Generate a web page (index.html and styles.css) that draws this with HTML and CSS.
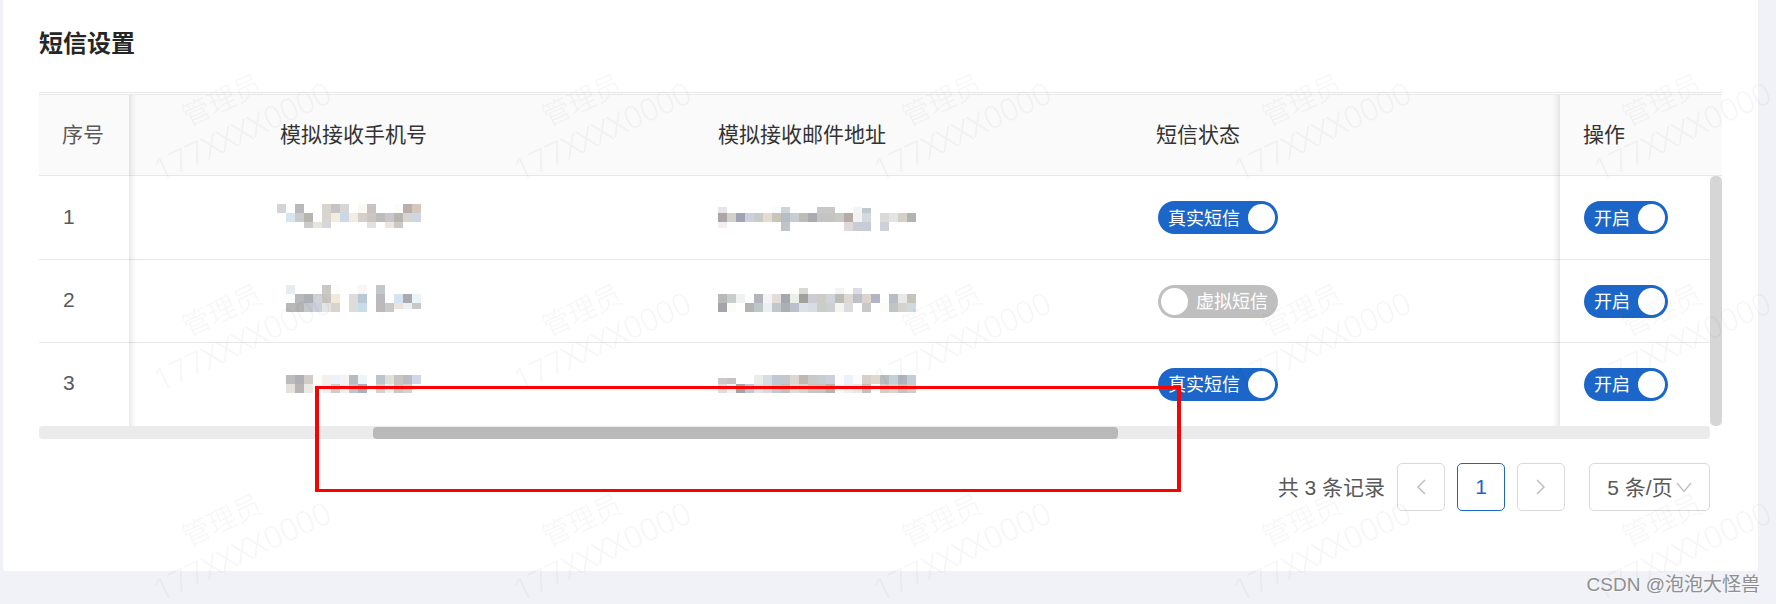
FILE: index.html
```html
<!DOCTYPE html>
<html lang="zh-CN">
<head>
    <meta charset="UTF-8">
    <title>短信设置</title>
    <link rel="stylesheet" href="styles.css">
</head>
<body>
    <div class="card">
        <h2 class="card-title">短信设置</h2>

        <div class="sms-table">
            <div class="table-head">
                <div class="cell fixed-left">序号</div>
                <div class="cell phone-head">模拟接收手机号</div>
                <div class="cell mail-head">模拟接收邮件地址</div>
                <div class="cell">短信状态</div>
                <div class="cell fixed-right">操作</div>
            </div>

            <div class="table-body">
                <div class="rows">
                    <div class="row">
                        <div class="cell fixed-left">1</div>
                        <div class="cell phone-cell">
                            <svg class="mosaic" width="144" height="36">
                                <rect x="0" y="4" fill="#d4d4d4"/><rect x="18" y="4" fill="#b8b8bd"/><rect x="45" y="4" fill="#d8d4ce"/><rect x="54" y="4" fill="#c6c3c6"/><rect x="63" y="4" fill="#d4d6d8"/><rect x="81" y="4" fill="#fbf7f2"/><rect x="90" y="4" fill="#c8c2c0"/><rect x="117" y="4" fill="#fbfdfd"/><rect x="126" y="4" fill="#b8b0ae"/><rect x="135" y="4" fill="#d4c8bc"/>
                                <rect x="9" y="13" fill="#d6e4f0"/><rect x="18" y="13" fill="#c8cccc"/><rect x="27" y="13" fill="#b8b4b0"/><rect x="45" y="13" fill="#d8d4cf"/><rect x="54" y="13" fill="#f4ecdc"/><rect x="63" y="13" fill="#ccd8e8"/><rect x="72" y="13" fill="#f4ece4"/><rect x="81" y="13" fill="#d4cfc9"/><rect x="90" y="13" fill="#ccc6c2"/><rect x="99" y="13" fill="#bcbcb8"/><rect x="108" y="13" fill="#c8c6cc"/><rect x="117" y="13" fill="#b8b4b0"/><rect x="126" y="13" fill="#d8d4d0"/><rect x="135" y="13" fill="#ccd6e4"/>
                                <rect class="short" x="27" y="22" fill="#cccccc"/><rect class="short" x="36" y="22" fill="#e8e4de"/><rect class="short" x="45" y="22" fill="#d4d8dc"/><rect class="short" x="90" y="22" fill="#e4e0de"/><rect class="short" x="108" y="22" fill="#f0e4de"/><rect class="short" x="117" y="22" fill="#ccc8c4"/>
                            </svg>
                        </div>
                        <div class="cell">
                            <svg class="mosaic" width="198" height="36">
                                <rect class="short" x="0" y="7" fill="#e6e6e6"/><rect class="short" x="54" y="7" fill="#f8fcfe"/><rect class="short" x="63" y="7" fill="#d0d4d8"/><rect class="short" x="99" y="7" fill="#c8c8c8"/><rect class="short" x="108" y="7" fill="#c8c8c8"/><rect class="short" x="135" y="7" fill="#f4f4f4"/><rect class="short" x="144" y="8" fill="#c0c8d0"/>
                                <rect x="0" y="13" fill="#aca6a6"/><rect x="9" y="13" fill="#d4d0cc"/><rect x="18" y="13" fill="#a0a4b4"/><rect x="27" y="13" fill="#ccd0dc"/><rect x="36" y="13" fill="#c8ccc8"/><rect x="45" y="13" fill="#e4dcd0"/><rect x="54" y="13" fill="#c8c4b8"/><rect x="63" y="13" fill="#b8bcc4"/><rect x="72" y="13" fill="#c8ccd4"/><rect x="81" y="13" fill="#bcbcb8"/><rect x="90" y="13" fill="#acacb0"/><rect x="99" y="13" fill="#c4c4c4"/><rect x="108" y="13" fill="#c4c4c0"/><rect x="117" y="13" fill="#c8c8c4"/><rect x="126" y="13" fill="#b4aca8"/><rect x="135" y="13" fill="#f4f2f0"/><rect x="144" y="13" fill="#d4d8e0"/><rect x="162" y="13" fill="#dcdad8"/><rect x="171" y="13" fill="#e4e4e2"/><rect x="180" y="13" fill="#d4d0c4"/><rect x="189" y="13" fill="#b0b4b0"/>
                                <rect class="short" x="0" y="22" fill="#f4eeee"/><rect x="63" y="22" fill="#c0c4c8"/><rect x="126" y="22" fill="#e0d8d8"/><rect x="135" y="22" fill="#c8ccd4"/><rect x="144" y="22" fill="#c8ccd4"/><rect x="162" y="22" fill="#ccd0d8"/>
                            </svg>
                        </div>
                        <div class="cell">
                            <span class="switch"><span>真实短信</span><i class="knob"></i></span>
                        </div>
                        <div class="cell fixed-right">
                            <span class="switch"><span>开启</span><i class="knob"></i></span>
                        </div>
                    </div>

                    <div class="row">
                        <div class="cell fixed-left">2</div>
                        <div class="cell phone-cell">
                            <svg class="mosaic" width="144" height="36">
                                <rect x="9" y="2" fill="#e4ecf4"/><rect x="45" y="2" fill="#ccc8c6"/><rect x="54" y="2" fill="#fbfdfb"/><rect x="81" y="2" fill="#fbf5f3"/><rect x="99" y="2" fill="#c4c8c8"/>
                                <rect x="9" y="11" fill="#fbfdfd"/><rect x="18" y="11" fill="#b8b8bc"/><rect x="27" y="11" fill="#acb0b4"/><rect x="36" y="11" fill="#d0d4d8"/><rect x="45" y="11" fill="#c8c4c2"/><rect x="54" y="11" fill="#f2ead8"/><rect x="72" y="11" fill="#dcdcdc"/><rect x="81" y="11" fill="#b8c8d4"/><rect x="99" y="11" fill="#bcb8bc"/><rect x="117" y="11" fill="#d4e4f0"/><rect x="126" y="11" fill="#aca8b0"/><rect x="135" y="11" fill="#e8f4f8"/>
                                <rect x="9" y="20" fill="#b8b8b8"/><rect x="18" y="20" fill="#b4b4b6"/><rect x="27" y="20" fill="#c4c8cc"/><rect x="36" y="20" fill="#ccd0dc"/><rect x="45" y="20" fill="#e4e4e4"/><rect x="54" y="20" fill="#d8d4ca"/><rect x="72" y="20" fill="#dcdcdc"/><rect x="81" y="20" fill="#c8dce8"/><rect x="99" y="20" fill="#bcb8bc"/><rect x="108" y="20" fill="#c8c8c8"/><rect class="short" x="117" y="20" fill="#ece4dc"/><rect class="short" x="126" y="20" fill="#ecf0f4"/><rect class="short" x="135" y="20" fill="#c8c8cc"/>
                            </svg>
                        </div>
                        <div class="cell">
                            <svg class="mosaic" width="198" height="36">
                                <rect class="short" x="81" y="5" fill="#d8d8d4"/><rect class="short" x="117" y="5" fill="#f4f4f4"/><rect class="short" x="135" y="5" fill="#dcdce8"/>
                                <rect x="0" y="11" fill="#b8b8b8"/><rect x="9" y="11" fill="#c8cccc"/><rect x="18" y="11" fill="#f0f2f2"/><rect x="36" y="11" fill="#b4b4bc"/><rect x="45" y="11" fill="#f4f4f6"/><rect x="54" y="11" fill="#e4dcd8"/><rect x="63" y="11" fill="#a4a8ac"/><rect x="72" y="11" fill="#eceee8"/><rect x="81" y="11" fill="#a0a09c"/><rect x="90" y="11" fill="#ccccd4"/><rect x="99" y="11" fill="#ccccc4"/><rect x="108" y="11" fill="#d0d4d8"/><rect x="117" y="11" fill="#bcbcb8"/><rect x="126" y="11" fill="#dcd8d4"/><rect x="135" y="11" fill="#bcc0c8"/><rect x="144" y="11" fill="#dcd4cc"/><rect x="153" y="11" fill="#b0b4c4"/><rect x="171" y="11" fill="#b8bcc4"/><rect x="180" y="11" fill="#e8e8e6"/><rect x="189" y="11" fill="#c4c4bc"/>
                                <rect x="0" y="20" fill="#a4a4ac"/><rect x="9" y="20" fill="#fcfcf6"/><rect x="27" y="20" fill="#b4b4b0"/><rect x="36" y="20" fill="#bcc8c8"/><rect x="45" y="20" fill="#eceef0"/><rect x="54" y="20" fill="#c0c8cc"/><rect x="63" y="20" fill="#acb0b4"/><rect x="72" y="20" fill="#bcc0cc"/><rect x="81" y="20" fill="#dce0e8"/><rect x="90" y="20" fill="#d8dce4"/><rect x="99" y="20" fill="#ccccc8"/><rect x="108" y="20" fill="#ccd0d0"/><rect x="117" y="20" fill="#f4f4f0"/><rect x="126" y="20" fill="#dcdcdc"/><rect x="144" y="20" fill="#c8c8c8"/><rect x="162" y="20" fill="#fcfcf8"/><rect x="171" y="20" fill="#c0c4c4"/><rect x="180" y="20" fill="#d4d4cc"/><rect x="189" y="20" fill="#d0d8e0"/>
                            </svg>
                        </div>
                        <div class="cell">
                            <span class="switch off"><span>虚拟短信</span><i class="knob"></i></span>
                        </div>
                        <div class="cell fixed-right">
                            <span class="switch"><span>开启</span><i class="knob"></i></span>
                        </div>
                    </div>

                    <div class="row">
                        <div class="cell fixed-left">3</div>
                        <div class="cell phone-cell">
                            <svg class="mosaic" width="144" height="36">
                                <rect x="9" y="9" fill="#bcbcbc"/><rect x="18" y="9" fill="#b0b0b4"/><rect x="27" y="9" fill="#d0ccc8"/><rect x="36" y="9" fill="#fdfdf8"/><rect x="45" y="9" fill="#f4f0ec"/><rect x="54" y="9" fill="#ecf2fa"/><rect x="63" y="9" fill="#f4f4f4"/><rect x="72" y="9" fill="#b8bcc0"/><rect x="81" y="9" fill="#ecf6fa"/><rect x="99" y="9" fill="#bcc4cc"/><rect x="108" y="9" fill="#e0e0d4"/><rect x="117" y="9" fill="#c8c4c0"/><rect x="126" y="9" fill="#bcbcc4"/><rect x="135" y="9" fill="#d0d8e8"/>
                                <rect x="9" y="18" fill="#e4e0dc"/><rect x="18" y="18" fill="#b8b6b4"/><rect x="27" y="18" fill="#ece8e4"/><rect x="45" y="18" fill="#f0f0f4"/><rect x="54" y="18" fill="#d4ccc4"/><rect x="63" y="18" fill="#f0f0f4"/><rect x="72" y="18" fill="#c0c4cc"/><rect x="81" y="18" fill="#a8b0bc"/><rect x="99" y="18" fill="#d8d0cc"/><rect x="108" y="18" fill="#f0f0f0"/><rect x="117" y="18" fill="#c8c8c4"/><rect x="126" y="18" fill="#d8d0cc"/>
                            </svg>
                        </div>
                        <div class="cell">
                            <svg class="mosaic" width="198" height="36">
                                <rect x="0" y="12" class="short" fill="#ccc8c8"/><rect x="9" y="12" class="short" fill="#c4c4c4"/><rect x="36" y="9" fill="#eceeec"/><rect x="45" y="9" fill="#d8dce4"/><rect x="54" y="9" fill="#c0c8d4"/><rect x="63" y="9" fill="#c4c8cc"/><rect x="72" y="9" fill="#dcd8d0"/><rect x="81" y="9" fill="#c0b8b0"/><rect x="90" y="9" fill="#ccc8c8"/><rect x="99" y="9" fill="#c4ccd4"/><rect x="108" y="9" fill="#ccd0dc"/><rect x="117" y="9" fill="#fcfcfc"/><rect x="126" y="9" fill="#ecf2fa"/><rect x="135" y="9" fill="#f8fcfc"/><rect x="144" y="9" fill="#d8d0c8"/><rect x="153" y="9" fill="#e0d8cc"/><rect x="162" y="9" fill="#b8bcc0"/><rect x="171" y="9" fill="#c4d0d8"/><rect x="180" y="9" fill="#b0b4bc"/><rect x="189" y="9" fill="#c4ccd8"/>
                                <rect x="0" y="18" fill="#e4dcdc"/><rect x="9" y="18" fill="#f0f4f8"/><rect x="18" y="18" fill="#a4a4a4"/><rect x="27" y="18" fill="#c0c8d4"/><rect x="36" y="18" fill="#e4e4e8"/><rect x="45" y="18" fill="#dcd8dc"/><rect x="54" y="18" fill="#c0c8d0"/><rect x="63" y="18" fill="#c0c0c0"/><rect x="72" y="18" fill="#e4dcd8"/><rect x="81" y="18" fill="#d8d4d0"/><rect x="90" y="18" fill="#c8c4c4"/><rect x="99" y="18" fill="#c4c4c4"/><rect x="108" y="18" fill="#b8b4ac"/><rect x="117" y="18" fill="#f8f8f8"/><rect x="126" y="18" fill="#ecf0f4"/><rect x="135" y="18" fill="#ece8e8"/><rect x="144" y="18" fill="#c4c0c4"/><rect x="162" y="18" fill="#d8ccc4"/><rect x="171" y="18" fill="#dcd4d0"/><rect x="180" y="18" fill="#c8c0bc"/><rect x="189" y="18" fill="#d0ccc8"/>
                            </svg>
                        </div>
                        <div class="cell">
                            <span class="switch"><span>真实短信</span><i class="knob"></i></span>
                        </div>
                        <div class="cell fixed-right">
                            <span class="switch"><span>开启</span><i class="knob"></i></span>
                        </div>
                    </div>
                </div>
                <div class="vbar"></div>
            </div>

            <div class="hbar"><div class="hbar-thumb"></div></div>
        </div>

        <div class="pager">
            <span class="pager-total">共 3 条记录</span>
            <span class="page-btn">
                <svg width="10" height="16" viewBox="0 0 10 16"><path d="M9 1 2 8l7 7" fill="none" stroke="#bfbfbf" stroke-width="1.5"/></svg>
            </span>
            <span class="page-btn active">1</span>
            <span class="page-btn">
                <svg width="10" height="16" viewBox="0 0 10 16"><path d="M1 1l7 7-7 7" fill="none" stroke="#bfbfbf" stroke-width="1.5"/></svg>
            </span>
            <span class="page-size"><span class="page-size-text">5 条/页</span><svg width="16" height="11" viewBox="0 0 16 11"><path d="M1 1l7 8.500 7-8.500" fill="none" stroke="#bfbfbf" stroke-width="1.300"/></svg></span>
        </div>
    </div>

    <!-- page watermark, repeats every 360x210 -->
    <svg class="watermark" width="1776" height="604">
        <defs>
            <pattern id="wmTile" width="360" height="210" patternUnits="userSpaceOnUse">
                <text class="wm-name" transform="translate(188 127) rotate(-25)">管理员</text>
                <text class="wm-phone" transform="translate(160 182) rotate(-25)">177XXXX0000</text>
            </pattern>
        </defs>
        <rect width="1776" height="604" fill="url(#wmTile)"/>
    </svg>

    <!-- annotation drawn on the screenshot -->
    <div class="red-box"></div>
    <div class="csdn-mark">CSDN @泡泡大怪兽</div>
</body>
</html>
```

FILE: styles.css
```css
html, body {
    margin: 0;
    height: 604px;
    overflow: hidden;
}
body {
    position: relative;
    font-family: "Liberation Sans", "Noto Sans CJK SC", sans-serif;
    font-size: 21px;
    color: #595959;
    background-color: #f0f2f7;
}
.card {
    width: 1755px;
    height: 571px;
    margin-left: 3px;
    padding: 28px 0 0 36px;
    box-sizing: border-box;
    background-color: white;
    border-radius: 0 0 3px 3px;
}
.card-title {
    margin: 0 0 32px;
    font-size: 24px;
    line-height: 32px;
    font-weight: bold;
    color: #262626;
}
.sms-table {
    width: 1683px;
    border-top: 1px solid #e8e8e8;
}
.table-head,
.row {
    display: grid;
    grid-template-columns: 90px 565px 440px 426px 1fr;
}
.table-head {
    grid-template-columns: 90px 565px 439px 427px 1fr;
    height: 82px;
    box-sizing: border-box;
    margin-top: 1px;
    border-top: 1px solid #ebebeb;
    border-bottom: 1px solid #e8e8e8;
    background-color: #fafafa;
    color: #333;
}
.cell {
    position: relative;
    display: flex;
    align-items: center;
    padding-left: 24px;
}
.table-head .cell {
    padding-left: 23px;
    padding-bottom: 4px;
}
.table-head .phone-head {
    padding-left: 151px;
}
.table-head .mail-head {
    padding-left: 24px;
}
.phone-cell {
    padding-left: 148px;
}
.fixed-left {
    color: #595959;
    padding-bottom: 2px;
}
.fixed-left::after,
.fixed-right::after {
    content: "";
    position: absolute;
    top: 0;
    bottom: -1px;
    width: 8px;
}
.fixed-left::after {
    right: -8px;
    background: linear-gradient(to right, rgba(0,0,0,0.09), rgba(0,0,0,0.03) 50%, rgba(0,0,0,0));
}
.fixed-right::after {
    left: -8px;
    background: linear-gradient(to left, rgba(0,0,0,0.09), rgba(0,0,0,0.03) 50%, rgba(0,0,0,0));
}
.table-body {
    display: flex;
    height: 250px;
}
.rows {
    flex: 1;
}
.row {
    height: 83px;
    box-sizing: border-box;
    border-bottom: 1px solid #e8e8e8;
}
.row:first-child {
    height: 84px;
}
.row:last-child {
    border-bottom-color: transparent;
}
.mosaic {
    display: block;
    shape-rendering: crispEdges;
}
.mosaic rect {
    width: 9px;
    height: 9px;
}
.mosaic rect.short {
    height: 6px;
}
.vbar {
    width: 12px;
    background-color: #d6d6d6;
    border-radius: 5px;
}
.hbar {
    width: 1671px;
    height: 13px;
    padding-top: 1px;
    box-sizing: border-box;
    background-color: #ebebeb;
    border-radius: 4px;
}
.hbar-thumb {
    width: 745px;
    height: 100%;
    margin-left: 334px;
    background-color: #b9b9b9;
    border-radius: 4px;
}
.switch {
    display: inline-flex;
    align-items: center;
    gap: 8px;
    height: 33px;
    padding: 0 3px 0 10px;
    font-size: 18px;
    color: white;
    background-color: #1b66c8;
    border-radius: 17px;
}
.switch span {
    padding-bottom: 2px;
}
.switch.off {
    flex-direction: row-reverse;
    padding: 0 10px 0 3px;
    background-color: #bfbfbf;
}
.knob {
    width: 27px;
    height: 27px;
    background-color: white;
    border-radius: 50%;
}
.pager {
    display: flex;
    justify-content: flex-end;
    align-items: center;
    gap: 12px;
    width: 1671px;
    margin-top: 24px;
}
.pager-total,
.page-size-text {
    padding-bottom: 2px;
}
.page-btn,
.page-size {
    display: flex;
    align-items: center;
    justify-content: center;
    box-sizing: border-box;
    height: 48px;
    border: 1px solid #d9d9d9;
    border-radius: 5px;
}
.page-btn {
    width: 48px;
}
.page-btn.active {
    border-color: #1b66c8;
    color: #1b66c8;
}
.page-size {
    gap: 3px;
    width: 121px;
    margin-left: 12px;
}
.watermark {
    position: absolute;
    left: 0;
    top: 0;
    pointer-events: none;
}
.wm-name,
.wm-phone {
    fill: rgba(0,0,0,0.035);
    font-weight: 300;
    font-family: "Noto Sans", "Noto Sans CJK SC", sans-serif;
}
.wm-name {
    font-size: 28px;
}
.wm-phone {
    font-size: 31px;
}
.red-box {
    position: absolute;
    left: 315px;
    top: 386px;
    width: 866px;
    height: 106px;
    box-sizing: border-box;
    border-style: solid;
    border-width: 3px 4px;
    border-color: #f00;
}
.csdn-mark {
    position: absolute;
    right: 16px;
    top: 573px;
    font-size: 19px;
    line-height: 24px;
    color: #8f8f8f;
    text-shadow: 1px 1px 1px rgba(255,255,255,0.6);
}
```
